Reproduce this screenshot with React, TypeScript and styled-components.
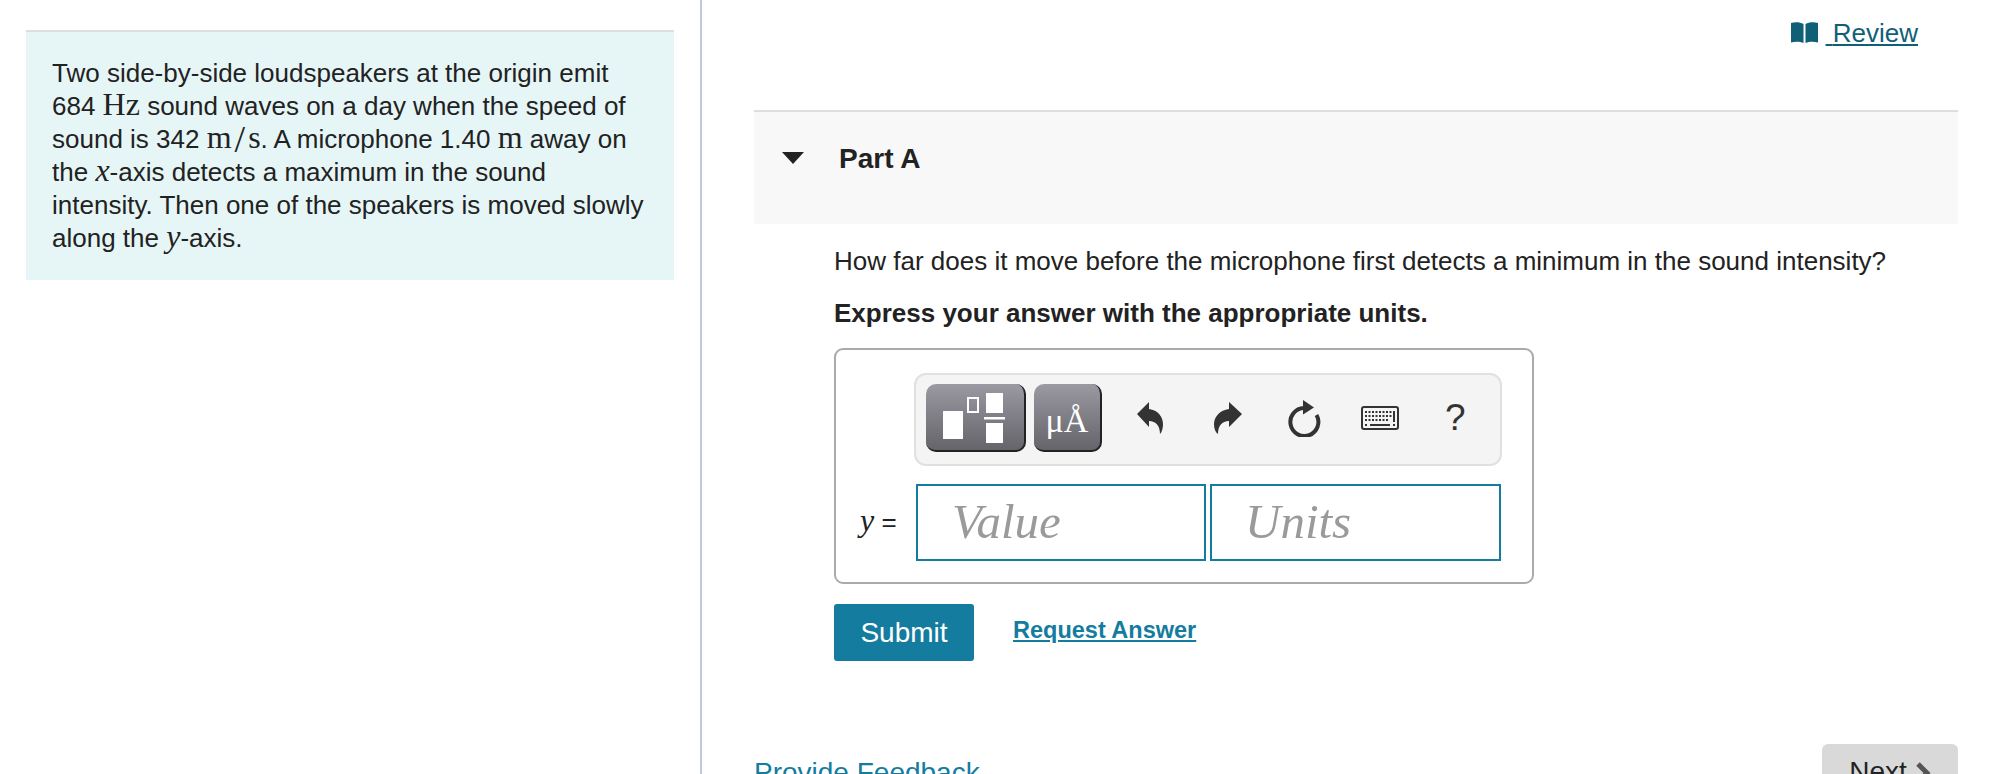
import { styled, createGlobalStyle } from 'styled-components';

const GlobalStyle = createGlobalStyle`
  html, body {
    margin: 0;
    background: #fff;
    font-family: "Liberation Sans", Arial, sans-serif;
    color: #222;
  }
`;

const Page = styled.div`
  display: flex;
  width: 1994px;
  height: 774px;
  overflow: hidden;
`;

const LeftColumn = styled.aside`
  box-sizing: border-box;
  width: 702px;
  height: 774px;
  flex: none;
  padding: 30px 26px 0;
  border-right: 2px solid #bccbdc;
`;

const Intro = styled.div`
  box-sizing: border-box;
  width: 648px;
  height: 250px;
  padding: 25px 26px 0;
  background: #e6f6f7;
  border-top: 2px solid #dedede;
  font-size: 26px;
  line-height: 33px;
`;

const MathText = styled.span<{ $italic?: boolean }>`
  font-family: "Liberation Serif", "DejaVu Serif", serif;
  font-style: ${({ $italic }) => ($italic ? 'italic' : 'normal')};
  font-size: 32px;
  line-height: 0;
`;

const Slash = styled.span`
  margin: 0 3px;
  font-size: 38px;
  font-weight: lighter;
  line-height: 0;
  vertical-align: -4px;
`;

const RightColumn = styled.main`
  box-sizing: border-box;
  flex: 1;
  padding-left: 52px;
  padding-right: 36px;
`;

const ReviewRow = styled.div`
  display: flex;
  justify-content: flex-end;
  height: 110px;
  padding: 17px 40px 0 0;
  box-sizing: border-box;
`;

const ReviewLink = styled.a`
  display: flex;
  align-items: flex-start;
  height: 34px;
  font-size: 26px;
  line-height: 32px;
  color: #0f5f77;
  text-decoration: none;
`;

const ReviewLabel = styled.span`
  margin-left: 8px;
  text-decoration: underline;
`;

const BookIcon = styled.svg`
  width: 27px;
  height: 22px;
  margin-top: 5px;
`;

const PartHeader = styled.header`
  box-sizing: border-box;
  display: flex;
  height: 114px;
  align-items: flex-start;
  padding: 31px 0 0 28px;
  background: #f8f8f8;
  border-top: 2px solid #dedede;
`;

const Caret = styled.svg`
  width: 22px;
  height: 12px;
  margin-top: 9px;
`;

const PartTitle = styled.h2`
  margin: 0 0 0 35px;
  font-size: 28px;
  line-height: 32px;
  font-weight: bold;
`;

const PartBody = styled.section`
  padding: 20px 0 0 80px;
`;

const Question = styled.p`
  margin: 0;
  font-size: 26px;
  line-height: 34px;
`;

const Instruction = styled.p`
  margin: 18px 0 0;
  font-size: 26px;
  line-height: 34px;
  font-weight: bold;
`;

const AnswerBox = styled.div`
  box-sizing: border-box;
  width: 700px;
  height: 236px;
  margin-top: 18px;
  padding: 23px 26px 0 78px;
  border: 2px solid #aaa;
  border-radius: 9px;
`;

const Toolbar = styled.div`
  box-sizing: border-box;
  display: flex;
  align-items: center;
  width: 588px;
  height: 93px;
  padding: 0 10px;
  gap: 8px;
  background: #f4f4f4;
  border: 2px solid #e0e0e0;
  border-radius: 12px;
`;

const PaletteButton = styled.button<{ $width: number; $lift?: number }>`
  box-sizing: border-box;
  display: flex;
  align-items: center;
  justify-content: center;
  width: ${({ $width }) => $width}px;
  height: 68px;
  padding: ${({ $lift }) => $lift ?? 0}px 0 0;
  margin-bottom: 3px;
  border: 0;
  border-radius: 10px;
  border-right: 2px solid #222;
  border-bottom: 2px solid #222;
  background: linear-gradient(#9b99a2, #64646a);
  color: #fff;
  font-family: "Liberation Serif", serif;
  font-size: 34px;
  line-height: 1;
`;

const ToolIcons = styled.div`
  display: flex;
  align-items: center;
  flex: 1;
  margin: 0 0 3px 27px;
`;

const ToolIcon = styled.svg<{ $gap: number }>`
  flex: none;
  margin-right: ${({ $gap }) => $gap}px;
  color: #333;
`;

const HelpMark = styled.span`
  font-size: 37px;
  line-height: 40px;
  color: #333;
`;

const InputRow = styled.div`
  display: flex;
  align-items: center;
  margin: 18px 0 0 -54px;
  gap: 4px;
`;

const VarLabel = styled.label`
  width: 52px;
  font-size: 26px;
  white-space: nowrap;
`;

const AnswerInput = styled.div<{ $width: number; $inset: number }>`
  box-sizing: border-box;
  width: ${({ $width }) => $width}px;
  height: 77px;
  padding: 8px 0 0 ${({ $inset }) => $inset}px;
  border: 2px solid #147c9e;
  font-family: "Liberation Serif", serif;
  font-style: italic;
  font-size: 49px;
  line-height: 56px;
  color: #9a9a9a;
`;

const Actions = styled.div`
  display: flex;
  align-items: flex-start;
  margin-top: 20px;
`;

const SubmitButton = styled.button`
  width: 140px;
  height: 57px;
  border: 0;
  border-radius: 3px;
  background: #147c9e;
  color: #fff;
  font-family: inherit;
  font-size: 28px;
`;

const RequestLink = styled.a`
  margin: 11px 0 0 39px;
  font-size: 23.5px;
  line-height: 30px;
  font-weight: bold;
  color: #147c9e;
  text-decoration: underline;
`;

const Footer = styled.footer`
  display: flex;
  justify-content: space-between;
  align-items: flex-start;
  margin-top: 83px;
`;

const FeedbackLink = styled.a`
  margin-top: 13px;
  font-size: 28px;
  line-height: 32px;
  color: #147c9e;
`;

const NextButton = styled.button`
  display: flex;
  align-items: flex-start;
  justify-content: center;
  gap: 8px;
  width: 136px;
  height: 60px;
  padding: 12px 0 0;
  border: 0;
  border-radius: 6px 6px 0 0;
  background: #d9d9d9;
  color: #222;
  font-family: inherit;
  font-size: 28px;
  line-height: 32px;
`;

const Chevron = styled.svg`
  width: 16px;
  height: 24px;
  margin-top: 5px;
`;

const Review = () => (
  <ReviewLink>
    <BookIcon viewBox="0 0 27 22">
      <path
        fill="#0f5f77"
        d="M0 1c4-1 9-1 12.500 1v19C9 19.500 4 19.500 0 20.500zM14.500 2C18 0 23 0 27 1v19.500c-4-1-9-1-12.500.5z"
      />
    </BookIcon>
    <ReviewLabel>{'\u00a0'}Review</ReviewLabel>
  </ReviewLink>
);

const FractionGlyph = () => (
  <svg width="64" height="52" viewBox="0 0 64 52">
    <path fill="#fff" d="M0 20h20v28H0z" />
    <path fill="none" stroke="#fff" strokeWidth="2" d="M25 7h10v14H25z" />
    <path fill="#fff" d="M43 2h17v20H43zM41 26h21v2.500H41zM43 32h17v20H43z" />
  </svg>
);

export default function App() {
  return (
    <>
      <GlobalStyle />
      <Page>
        <LeftColumn>
          <Intro>
            Two side-by-side loudspeakers at the origin emit
            <br />
            684 <MathText>Hz</MathText> sound waves on a day when the speed of
            <br />
            sound is 342{' '}
            <MathText>
              m<Slash>/</Slash>s
            </MathText>
            . A microphone 1.40 <MathText>m</MathText> away on
            <br />
            the <MathText $italic>x</MathText>-axis detects a maximum in the sound
            <br />
            intensity. Then one of the speakers is moved slowly
            <br />
            along the <MathText $italic>y</MathText>-axis.
          </Intro>
        </LeftColumn>
        <RightColumn>
          <ReviewRow>
            <Review />
          </ReviewRow>
          <PartHeader>
            <Caret viewBox="0 0 22 12">
              <path fill="#222" d="M0 0h22L11 12z" />
            </Caret>
            <PartTitle>Part A</PartTitle>
          </PartHeader>
          <PartBody>
            <Question>How far does it move before the microphone first detects a minimum in the sound intensity?</Question>
            <Instruction>Express your answer with the appropriate units.</Instruction>
            <AnswerBox>
              <Toolbar>
                <PaletteButton $width={100}>
                  <FractionGlyph />
                </PaletteButton>
                <PaletteButton $width={68} $lift={8}>
                  μÅ
                </PaletteButton>
                <ToolIcons>
                  <ToolIcon $gap={51} width="26" height="32" viewBox="0 0 26 32">
                    <path fill="currentColor" d="M0 12 12 0v7c9 1 14 8 14 15 0 4-1 8-3 10 0-8-4-13-11-13v6z" />
                  </ToolIcon>
                  <ToolIcon $gap={46} width="28" height="32" viewBox="0 0 28 32">
                    <path fill="currentColor" d="M28 12 15 0v7C6 8 0 15 0 22c0 4 1 8 4 10 0-8 4-13 11-13v6z" />
                  </ToolIcon>
                  <ToolIcon $gap={40} width="33" height="37" viewBox="0 0 33 37">
                    <path fill="none" stroke="currentColor" strokeWidth="4" d="M28.500 15A14 14 0 1 1 16 8" />
                    <path fill="currentColor" d="M15 0l11 7.500-11 7z" />
                  </ToolIcon>
                  <ToolIcon $gap={46} width="38" height="24" viewBox="0 0 38 24">
                    <rect x="1" y="1" width="36" height="22" rx="2" fill="none" stroke="currentColor" strokeWidth="2" />
                    <path
                      fill="none"
                      stroke="currentColor"
                      strokeWidth="2"
                      strokeDasharray="2 1.500"
                      d="M4 6h27M4 10h27M4 14h24"
                    />
                    <path fill="none" stroke="currentColor" strokeWidth="2" d="M9 19h20M4 19h2M32 19h2M33 5v11" />
                  </ToolIcon>
                  <HelpMark>?</HelpMark>
                </ToolIcons>
              </Toolbar>
              <InputRow>
                <VarLabel>
                  <MathText $italic>y</MathText> =
                </VarLabel>
                <AnswerInput $width={290} $inset={34}>
                  Value
                </AnswerInput>
                <AnswerInput $width={291} $inset={33}>
                  Units
                </AnswerInput>
              </InputRow>
            </AnswerBox>
            <Actions>
              <SubmitButton>Submit</SubmitButton>
              <RequestLink>Request Answer</RequestLink>
            </Actions>
          </PartBody>
          <Footer>
            <FeedbackLink>Provide Feedback</FeedbackLink>
            <NextButton>
              Next
              <Chevron viewBox="0 0 16 24">
                <path fill="none" stroke="#555" strokeWidth="5" d="M3 3l9 9-9 9" />
              </Chevron>
            </NextButton>
          </Footer>
        </RightColumn>
      </Page>
    </>
  );
}
